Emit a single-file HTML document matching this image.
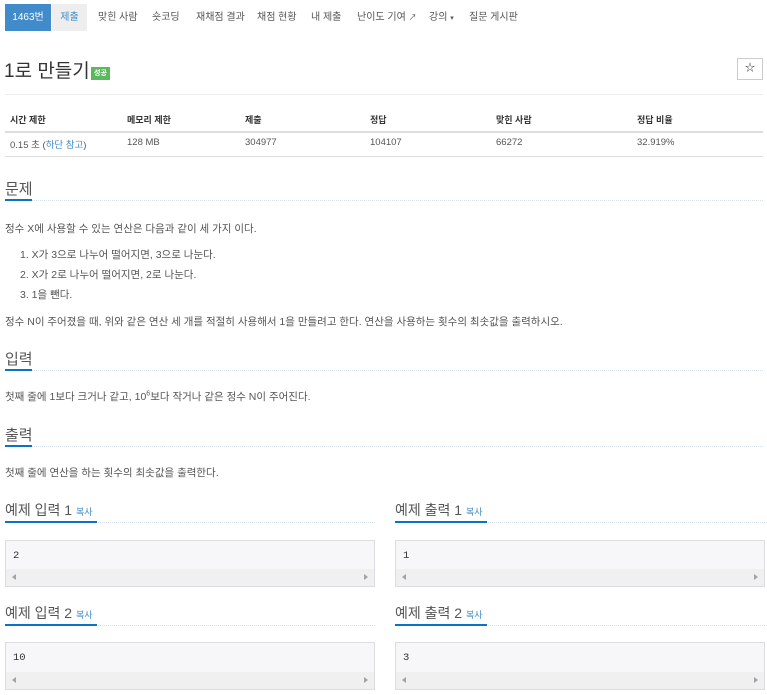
<!DOCTYPE html>
<html><head><meta charset="utf-8"><style>
body{margin:0;width:767px;height:695px;overflow:hidden;background:#fff;font-family:"Liberation Sans","Noto Sans CJK KR",sans-serif;color:#555;position:relative}
.a{position:absolute;white-space:nowrap}
.nav{font-size:10px;color:#555;top:4px;height:27px;line-height:27px}
.h{font-size:15px;color:#555}
.ul{position:absolute;height:0;border-top:1px dotted #d6e0ea}
.ub{position:absolute;height:0;border-top:2px solid #0a74c2}
.t{font-size:10.5px;color:#555}
.th{font-size:9px;font-weight:bold;color:#333}
.box{position:absolute;border:1px solid #dcdde3;background:#f7f7f9;box-sizing:border-box;height:47px}
.box .sb{position:absolute;left:0;right:0;bottom:0;height:17px;background:#f0f0f0}
.box .c{position:absolute;left:7px;top:9px;font-family:"Liberation Mono",monospace;font-size:10.5px;color:#333}
.box .l,.box .r{position:absolute;top:5px;width:0;height:0;border-top:3.5px solid transparent;border-bottom:3.5px solid transparent}
.box .l{left:6px;border-right:4px solid #a3a3a3}
.box .r{right:6px;border-left:4px solid #a3a3a3}
.cp{font-size:9px;color:#428bca}
</style></head><body>
<div class="a nav" style="left:5px;width:46px;background:#428bca;color:#fff;text-align:center">1463번</div>
<div class="a nav" style="left:52px;width:35px;background:#eee;text-align:center;color:#428bca">제출</div>
<div class="a nav" style="left:98px">맞힌 사람</div>
<div class="a nav" style="left:152px">숏코딩</div>
<div class="a nav" style="left:196px">재채점 결과</div>
<div class="a nav" style="left:257px">채점 현황</div>
<div class="a nav" style="left:311px">내 제출</div>
<div class="a nav" style="left:357px">난이도 기여 <span style="font-size:8px">↗</span></div>
<div class="a nav" style="left:429px">강의 <span style="font-size:7px">▾</span></div>
<div class="a nav" style="left:469px">질문 게시판</div>

<div class="a" style="left:4px;top:58px;font-size:19px;color:#333;line-height:28px">1로 만들기</div>
<div class="a" style="left:91px;top:67px;background:#5cb85c;color:#fff;font-size:7px;font-weight:bold;padding:0 3px;height:13px;line-height:13px">성공</div>
<div class="a" style="left:737px;top:58px;width:26px;height:22px;border:1px solid #ccc;box-sizing:border-box;text-align:center;line-height:20px;font-size:10px;color:#333">☆</div>
<div class="a" style="left:5px;top:94px;width:758px;border-top:1px solid #eee"></div>

<div class="a th" style="left:10px;top:113px">시간 제한</div>
<div class="a th" style="left:127px;top:113px">메모리 제한</div>
<div class="a th" style="left:245px;top:113px">제출</div>
<div class="a th" style="left:370px;top:113px">정답</div>
<div class="a th" style="left:496px;top:113px">맞힌 사람</div>
<div class="a th" style="left:637px;top:113px">정답 비율</div>
<div class="a" style="left:5px;top:131px;width:758px;border-top:2px solid #ddd"></div>
<div class="a t" style="left:10px;top:137px;font-size:9.5px">0.15 초 (<span style="color:#428bca">하단 참고</span>)</div>
<div class="a t" style="left:127px;top:137px;font-size:9.5px">128 MB</div>
<div class="a t" style="left:245px;top:137px;font-size:9.5px">304977</div>
<div class="a t" style="left:370px;top:137px;font-size:9.5px">104107</div>
<div class="a t" style="left:496px;top:137px;font-size:9.5px">66272</div>
<div class="a t" style="left:637px;top:137px;font-size:9.5px">32.919%</div>
<div class="a" style="left:5px;top:156px;width:758px;border-top:1px solid #ddd"></div>

<div class="a h" style="left:5px;top:178px">문제</div>
<div class="ul" style="left:5px;top:200px;width:758px"></div><div class="ub" style="left:5px;top:199px;width:27px"></div>
<div class="a t" style="left:5px;top:221px">정수 X에 사용할 수 있는 연산은 다음과 같이 세 가지 이다.</div>
<div class="a t" style="left:20px;top:247px">1. X가 3으로 나누어 떨어지면, 3으로 나눈다.</div>
<div class="a t" style="left:20px;top:267px">2. X가 2로 나누어 떨어지면, 2로 나눈다.</div>
<div class="a t" style="left:20px;top:287px">3. 1을 뺀다.</div>
<div class="a t" style="left:5px;top:314px">정수 N이 주어졌을 때, 위와 같은 연산 세 개를 적절히 사용해서 1을 만들려고 한다. 연산을 사용하는 횟수의 최솟값을 출력하시오.</div>

<div class="a h" style="left:5px;top:348px">입력</div>
<div class="ul" style="left:5px;top:370px;width:758px"></div><div class="ub" style="left:5px;top:369px;width:27px"></div>
<div class="a t" style="left:5px;top:389px">첫째 줄에 1보다 크거나 같고, 10<sup style="font-size:7px">6</sup>보다 작거나 같은 정수 N이 주어진다.</div>

<div class="a h" style="left:5px;top:424px">출력</div>
<div class="ul" style="left:5px;top:446px;width:758px"></div><div class="ub" style="left:5px;top:445px;width:27px"></div>
<div class="a t" style="left:5px;top:465px">첫째 줄에 연산을 하는 횟수의 최솟값을 출력한다.</div>

<div class="a h" style="left:5px;top:500px;font-size:14px">예제 입력 1 <span class="cp">복사</span></div>
<div class="ul" style="left:5px;top:522px;width:370px"></div><div class="ub" style="left:5px;top:521px;width:92px"></div>
<div class="a h" style="left:395px;top:500px;font-size:14px">예제 출력 1 <span class="cp">복사</span></div>
<div class="ul" style="left:395px;top:522px;width:370px"></div><div class="ub" style="left:395px;top:521px;width:92px"></div>
<div class="box" style="left:5px;top:540px;width:370px"><div class="c">2</div><div class="sb"><div class="l"></div><div class="r"></div></div></div>
<div class="box" style="left:395px;top:540px;width:370px"><div class="c">1</div><div class="sb"><div class="l"></div><div class="r"></div></div></div>

<div class="a h" style="left:5px;top:603px;font-size:14px">예제 입력 2 <span class="cp">복사</span></div>
<div class="ul" style="left:5px;top:625px;width:370px"></div><div class="ub" style="left:5px;top:624px;width:92px"></div>
<div class="a h" style="left:395px;top:603px;font-size:14px">예제 출력 2 <span class="cp">복사</span></div>
<div class="ul" style="left:395px;top:625px;width:370px"></div><div class="ub" style="left:395px;top:624px;width:92px"></div>
<div class="box" style="left:5px;top:642px;width:370px;height:48px"><div class="c">10</div><div class="sb"><div class="l"></div><div class="r"></div></div></div>
<div class="box" style="left:395px;top:642px;width:370px;height:48px"><div class="c">3</div><div class="sb"><div class="l"></div><div class="r"></div></div></div>
</body></html>
